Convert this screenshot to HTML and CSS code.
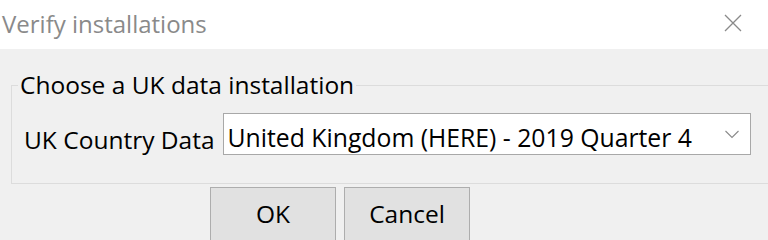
FILE: index.html
```html
<!DOCTYPE html>
<html>
<head>
<meta charset="utf-8">
<link rel="stylesheet" href="styles.css">
</head>
<body>
<div class="dialog">
  <div class="titlebar">
    <span class="title">Verify installations</span>
    <svg class="close" width="18" height="18" viewBox="0 0 18 18"><path d="M1 1 L17 17 M17 1 L1 17" stroke="#8a8a8a" stroke-width="1.3" fill="none"/></svg>
  </div>
  <div class="content">
    <fieldset class="group">
      <legend class="legend">Choose a UK data installation</legend>
      <div class="row">
        <span class="label">UK Country Data</span>
        <div class="combo">
          <span class="combo-text">United Kingdom (HERE) - 2019 Quarter 4</span>
          <svg class="chev" width="16" height="9" viewBox="0 0 16 9"><path d="M1.5 1 L8 7.5 L14.5 1" stroke="#8a8a8a" stroke-width="1.1" fill="none"/></svg>
        </div>
      </div>
    </fieldset>
    <div class="buttons">
      <button class="btn">OK</button>
      <button class="btn">Cancel</button>
    </div>
  </div>
</div>
</body>
</html>
```
FILE: styles.css
```css
html, body {
  margin: 0;
  padding: 0;
  width: 768px;
  height: 240px;
  overflow: hidden;
  background: #f0f0f0;
  font-family: "Open Sans", "Noto Sans", sans-serif;
}
.dialog {
  width: 768px;
  height: 240px;
  display: flex;
  flex-direction: column;
  overflow: hidden;
}
.titlebar {
  height: 49px;
  background: #ffffff;
  display: flex;
  align-items: flex-start;
  justify-content: space-between;
  padding: 0 26px 0 2px;
  flex-shrink: 0;
}
.title {
  font-size: 24px;
  line-height: 30px;
  color: #8a8a8a;
  padding-top: 9px;
}
.close {
  margin-top: 14px;
}
.content {
  padding-top: 21px;
  padding-left: 11px;
}
.group {
  margin: 0;
  width: 757px;
  border: 1px solid #dcdcdc;
  border-right: none;
  padding: 0 0 28px 6px;
  box-sizing: border-box;
  min-width: 0;
}
.legend {
  font-size: 24.5px;
  line-height: 30px;
  color: #000;
  padding: 0 2px;
}
.row {
  display: flex;
  align-items: flex-start;
  margin-top: 13px;
  margin-left: 6px;
}
.label {
  font-size: 24.5px;
  line-height: 30px;
  color: #000;
  margin-top: 11.5px;
  margin-right: 8px;
  white-space: nowrap;
}
.combo {
  width: 528px;
  height: 42px;
  flex-shrink: 0;
  box-sizing: border-box;
  background: #fff;
  border: 1px solid #a8a8a8;
  display: flex;
  align-items: center;
  justify-content: space-between;
  padding: 0 10px 0 4px;
}
.combo-text {
  font-size: 24.75px;
  line-height: 30px;
  color: #000;
  align-self: flex-start;
  margin-top: 8.5px;
  white-space: nowrap;
}
.buttons {
  display: flex;
  gap: 8px;
  padding-left: 199px;
  margin-top: 3px;
}
.btn {
  width: 126px;
  background: #e1e1e1;
  border: 1px solid #adadad;
  font-family: "Open Sans", "Noto Sans", sans-serif;
  font-size: 24.5px;
  line-height: 30px;
  color: #000;
  padding: 10.5px 0 20px 0;
  margin: 0;
}
```
